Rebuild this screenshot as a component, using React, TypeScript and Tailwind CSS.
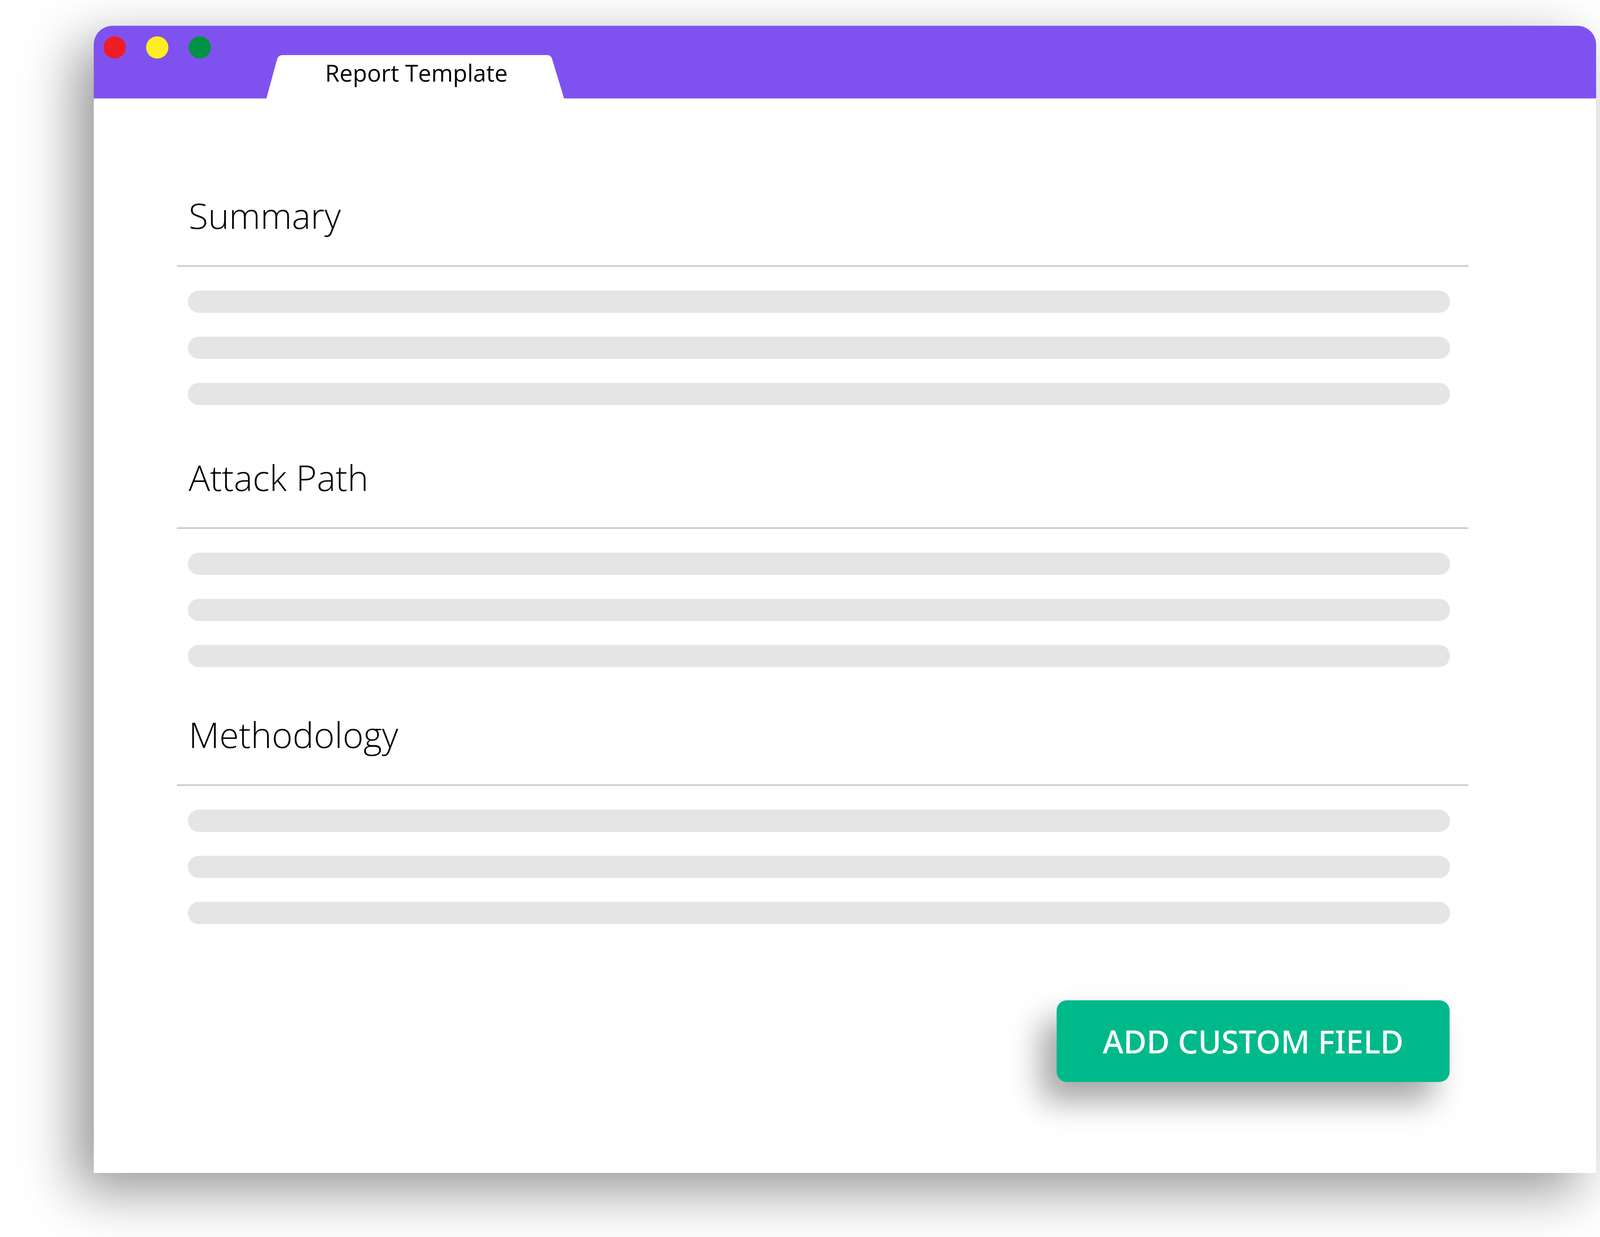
import React from "react";

const Bars = ({ className }: { className: string }) => (
  <div className={`flex flex-col gap-[61px] ml-[28px] mr-[47px] ${className}`}>
    <div className="h-[57px] rounded-[28px] bg-[#e5e5e5]" />
    <div className="h-[57px] rounded-[28px] bg-[#e5e5e5]" />
    <div className="h-[57px] rounded-[28px] bg-[#e5e5e5]" />
  </div>
);

const Section = ({ title, top }: { title: string; top: string }) => (
  <section className={`flex flex-col ${top}`}>
    <h2 className="h-[91px] pl-[30px] text-[91px] leading-[91px] font-[350] text-black font-['Open_Sans',sans-serif] whitespace-nowrap">
      {title}
    </h2>
    <div className="mt-[82px] h-[4px] bg-[#cbcbcb]" />
    <Bars className="mt-[61px]" />
  </section>
);

export default function App() {
  return (
    <div className="w-[4167px] h-[3167px] bg-white pt-[66px] pl-[240px] overflow-hidden">
      <div className="w-[3846px] h-[2937px] bg-white rounded-t-[48px] shadow-[-45px_45px_140px_rgba(0,0,0,0.42)] flex flex-col">
        <header className="h-[186px] shrink-0 bg-[#7f52f0] rounded-t-[48px] flex items-start">
          <div className="pt-[27px] pl-[25px] flex gap-[52px]">
            <span className="w-[57px] h-[57px] rounded-full bg-[#ee1c25]" />
            <span className="w-[57px] h-[57px] rounded-full bg-[#fdee21]" />
            <span className="w-[57px] h-[57px] rounded-full bg-[#009245]" />
          </div>
          <div className="relative ml-[142px] mt-[75px] h-[111px] w-[762px] flex justify-center pt-[15px] pl-[6px]">
            <svg className="absolute inset-0" width="762" height="111" viewBox="0 0 762 111">
              <path d="M0 111 L27 12 Q30 0 42 0 L720 0 Q729 0 732 12 L762 111 Z" fill="#ffffff" />
            </svg>
            <span className="relative text-[60px] leading-[60px] font-normal text-black font-['Open_Sans',sans-serif] whitespace-nowrap">
              Report Template
            </span>
          </div>
        </header>
        <main className="ml-[213px] w-[3306px] flex flex-col">
          <Section title="Summary" top="mt-[254px]" />
          <Section title="Attack Path" top="mt-[140px]" />
          <Section title="Methodology" top="mt-[127px]" />
          <div className="mt-[195px] mr-[48px] flex justify-end">
            <button className="w-[1006px] h-[209px] rounded-[26px] bg-[#00b98a] text-white text-[81px] font-medium font-['Noto_Sans',sans-serif] flex items-center justify-center shadow-[-40px_50px_80px_rgba(0,0,0,0.35)] whitespace-nowrap">
              ADD CUSTOM FIELD
            </button>
          </div>
        </main>
      </div>
    </div>
  );
}
